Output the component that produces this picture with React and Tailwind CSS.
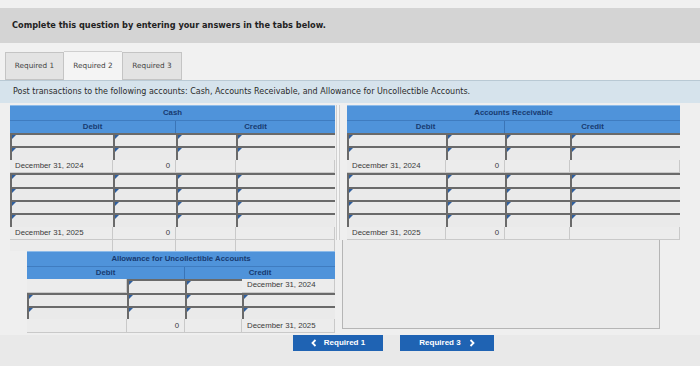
import React from 'react';

const tableFont = { fontFamily: '"Liberation Sans", Arial, sans-serif' };

function Cell({ w, input, children, right }) {
	if (input) {
		return (
			<div
				className="relative h-full shrink-0 border-t-2 border-l-2 border-[#6a6a6a] bg-[#eaeaea]"
				style={{ width: w }}
			>
				<span className="absolute left-0 top-0 h-0 w-0 border-t-[4px] border-r-[4px] border-t-[#2f5f9e] border-r-transparent" />
			</div>
		);
	}
	return (
		<div
			className={`flex h-full shrink-0 items-center border-r border-b border-[#c9c9c9] bg-[#ececec] px-[5px] text-[7.8px] text-[#3a3a3a] ${right ? 'justify-end' : ''}`}
			style={{ width: w }}
		>
			{children}
		</div>
	);
}

function TRow({ cols, cells }) {
	return (
		<div className="flex h-[13.4px]">
			{cells.map((c, i) => (
				<Cell key={i} w={cols[i]} input={c === 'in'} right={i === 1}>
					{c !== 'in' ? c : null}
				</Cell>
			))}
		</div>
	);
}

function Ledger({ title, cols, rows, className }) {
	const debitW = cols[0] + cols[1];
	const creditW = cols[2] + cols[3];
	return (
		<div className={className} style={tableFont}>
			<div className="flex h-[15px] items-center justify-center border-t border-[#8dbbe9] bg-[#4f93da] text-[7.8px] font-bold text-[#173a70]">
				{title}
			</div>
			<div className="flex h-[13px] border-t border-[#3f7cc0] bg-[#4f93da] text-[7.8px] font-bold text-[#173a70]">
				<div className="flex items-center justify-center border-r border-[#3a74b6]" style={{ width: debitW }}>
					Debit
				</div>
				<div className="flex items-center justify-center" style={{ width: creditW }}>
					Credit
				</div>
			</div>
			{rows.map((r, i) => (
				<TRow key={i} cols={cols} cells={r} />
			))}
		</div>
	);
}

function Chevron({ left }) {
	return (
		<svg width="6" height="8" viewBox="0 0 6 8" className="shrink-0">
			<path
				d={left ? 'M4.5 1 L1.5 4 L4.5 7' : 'M1.5 1 L4.5 4 L1.5 7'}
				fill="none"
				stroke="white"
				strokeWidth="1.8"
			/>
		</svg>
	);
}

const IN = ['in', 'in', 'in', 'in'];

export default function App() {
	const cashCols = [103, 63, 60, 99];
	const arCols = [99, 59, 65, 110];
	const allowCols = [100, 58, 57, 93];

	const mainRows = [
		IN,
		IN,
		['December 31, 2024', '0', '', ''],
		IN,
		IN,
		IN,
		IN,
		['December 31, 2025', '0', '', ''],
	];

	const allowRows = [
		['', 'in', 'in', 'December 31, 2024'],
		IN,
		IN,
		['', '0', '', 'December 31, 2025'],
	];

	return (
		<div className="h-[366px] w-[700px] overflow-hidden bg-[#ededed]" style={{ fontFamily: '"DejaVu Sans", Verdana, sans-serif' }}>
			<div className="h-[8px] bg-[#f0f0f0]" />
			<div className="flex h-[35px] items-center bg-[#d4d4d4] pl-[12px] text-[8.2px] font-bold text-[#222]">
				Complete this question by entering your answers in the tabs below.
			</div>
			<div className="flex h-[37px] items-end bg-[#f1f1f1] pl-[5px]">
				<div className="flex h-[28px] w-[59px] items-center justify-center border border-[#c4c4c4] bg-[#e3e3e3] text-[7.3px] text-[#444]">
					Required 1
				</div>
				<div className="flex h-[29px] w-[58px] items-center justify-center border-t border-[#cfcfcf] bg-[#f4f4f4] text-[7.3px] text-[#444]">
					Required 2
				</div>
				<div className="flex h-[28px] w-[60px] items-center justify-center border border-[#c4c4c4] bg-[#e3e3e3] text-[7.3px] text-[#444]">
					Required 3
				</div>
			</div>
			<div className="flex h-[23px] items-center border-t border-[#b9c9d4] bg-[#d6e3ec] pl-[13px] text-[8px] text-[#2b2b2b]">
				Post transactions to the following accounts: Cash, Accounts Receivable, and Allowance for Uncollectible Accounts.
			</div>
			<div className="flex h-[232px] bg-[#efefef] pt-[2px]">
				<div className="ml-[10px] w-[330px]">
					<div className="flex">
						<Ledger title="Cash" cols={cashCols} rows={mainRows} className="w-[325px]" />
						<div className="ml-[1px] w-[5px] border-x border-[#d0d0d0] bg-[#f4f4f4]" />
					</div>
					<div className="flex h-[11px]">
						{cashCols.map((w, i) => (
							<div key={i} className="h-full border-r border-[#c9c9c9] bg-[#ececec]" style={{ width: w }} />
						))}
					</div>
					<Ledger title="Allowance for Uncollectible Accounts" cols={allowCols} rows={allowRows} className="ml-[17px] w-[308px]" />
				</div>
				<div className="ml-[2px] w-[338px]">
					<div className="ml-[5px]">
						<Ledger title="Accounts Receivable" cols={arCols} rows={mainRows} />
					</div>
					<div className="h-[89px] w-[318px] border-r border-b border-l border-[#b5b5b5] bg-[#ebebeb]" />
				</div>
			</div>
			<div className="flex h-[31px] items-start bg-[#e9e9e9]" style={tableFont}>
				<div className="ml-[293px] flex h-[16px] w-[90px] items-center justify-center gap-[7px] bg-[#1f63b3] text-[8px] font-bold text-white">
					<Chevron left />
					<span>Required 1</span>
				</div>
				<div className="ml-[17px] flex h-[16px] w-[94px] items-center justify-center gap-[8px] bg-[#1f63b3] text-[8px] font-bold text-white">
					<span>Required 3</span>
					<Chevron />
				</div>
			</div>
		</div>
	);
}
